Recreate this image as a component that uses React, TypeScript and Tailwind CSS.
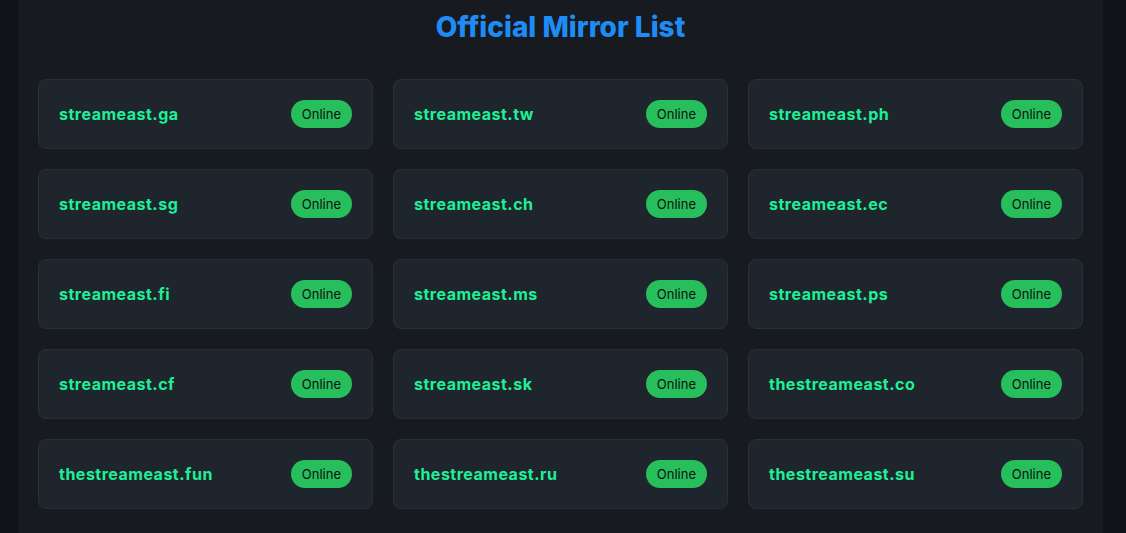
import React from "react";

const mirrors = [
  "streameast.ga",
  "streameast.tw",
  "streameast.ph",
  "streameast.sg",
  "streameast.ch",
  "streameast.ec",
  "streameast.fi",
  "streameast.ms",
  "streameast.ps",
  "streameast.cf",
  "streameast.sk",
  "thestreameast.co",
  "thestreameast.fun",
  "thestreameast.ru",
  "thestreameast.su",
];

const MirrorCard: React.FC<{ domain: string }> = ({ domain }) => (
  <div className="h-[70px] flex items-center justify-between px-5 bg-[#1f252d] border border-[#2a3038] rounded-lg">
    <span className="text-[16px] font-bold text-[#1ef096] tracking-[0.5px]">
      {domain}
    </span>
    <span className="h-7 px-[11px] flex items-center rounded-full bg-[#27be5c] text-[13px] text-[#111] leading-none">
      Online
    </span>
  </div>
);

export default function App() {
  return (
    <div
      className="w-full h-[533px] bg-[#101317] pl-[18px] pr-[23px] overflow-hidden"
      style={{ fontFamily: "Inter, 'Noto Sans', sans-serif" }}
    >
      <div className="h-full bg-[#171a1f] px-5 pt-[6px]">
        <h2 className="text-center text-[28px] leading-[42px] font-extrabold text-[#1e8cf5] mb-[31px]">
          Official Mirror List
        </h2>
        <div className="grid grid-cols-3 gap-5">
          {mirrors.map((m) => (
            <MirrorCard key={m} domain={m} />
          ))}
        </div>
      </div>
    </div>
  );
}
